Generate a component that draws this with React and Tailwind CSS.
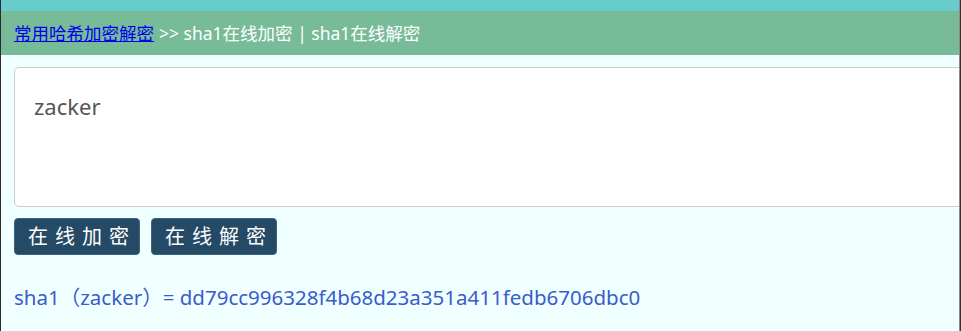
import React from 'react';

const font = { fontFamily: '"Noto Sans", "Noto Sans CJK SC", sans-serif' };

function App() {
  return (
    <div
      className="w-[961px] h-[331px] overflow-hidden flex bg-[#f0ffff] border-l border-[#2b2b2b]"
      style={font}
    >
      <div className="flex-1 min-w-0 overflow-hidden">
        {/* top strip */}
        <div className="h-[11px] bg-[#66cccc]" />

        {/* breadcrumb */}
        <div className="h-[44px] bg-[#77bb99] px-[13px] flex items-center text-[17.5px] text-white whitespace-nowrap">
          <a href="#" className="text-[#0000ee] underline">常用哈希加密解密</a>
          <span className="ml-[5px]">&gt;&gt; sha1在线加密 | sha1在线解密</span>
        </div>

        <div className="px-[13px] pt-[12px]">
          <textarea
            defaultValue="zacker"
            className="block w-[1000px] h-[140px] resize-none bg-white border border-[#cccccc] rounded-[5px] px-[19px] pt-[23px] text-[22px] leading-[30px] text-[#555555] outline-none"
            style={font}
          />

          <div className="flex gap-[11px] mt-[11px]">
            <button className="h-[37px] pl-[13px] pr-[3px] bg-[#244a66] border border-[#3a6482] rounded-[4px] text-white text-[20px] tracking-[7px] leading-none">
              在线加密
            </button>
            <button className="h-[37px] pl-[13px] pr-[3px] bg-[#244a66] border border-[#3a6482] rounded-[4px] text-white text-[20px] tracking-[7px] leading-none">
              在线解密
            </button>
          </div>

          <p className="mt-[27px] text-[20.5px] leading-[30px] text-[#3a5ccc] whitespace-nowrap">
            sha1（zacker）= dd79cc996328f4b68d23a351a411fedb6706dbc0
          </p>
        </div>
      </div>
      <div className="w-px bg-[#8a8a8a]" />
      <div className="w-px bg-[#333333]" />
    </div>
  );
}

export default App;
